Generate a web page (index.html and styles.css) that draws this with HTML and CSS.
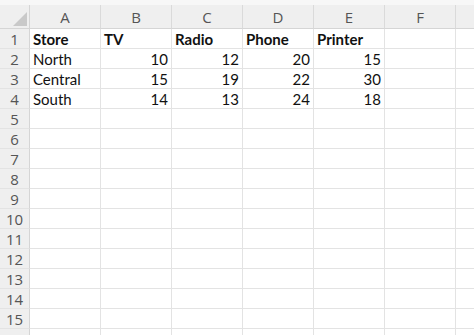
FILE: index.html
```html
<!DOCTYPE html>
<html>
<head>
<meta charset="utf-8">
<link rel="stylesheet" href="styles.css">
</head>
<body>
<div class="sheet">
  <div class="topstrip"></div>
  <div class="grid">
    <div class="corner"><div class="tri"></div></div>
    <div class="ch">A</div><div class="ch">B</div><div class="ch">C</div><div class="ch">D</div><div class="ch">E</div><div class="ch">F</div><div class="ch last"></div>

    <div class="rh">1</div><div class="c b">Store</div><div class="c b">TV</div><div class="c b">Radio</div><div class="c b">Phone</div><div class="c b">Printer</div><div class="c"></div><div class="c last"></div>
    <div class="rh">2</div><div class="c">North</div><div class="c n">10</div><div class="c n">12</div><div class="c n">20</div><div class="c n">15</div><div class="c"></div><div class="c last"></div>
    <div class="rh">3</div><div class="c">Central</div><div class="c n">15</div><div class="c n">19</div><div class="c n">22</div><div class="c n">30</div><div class="c"></div><div class="c last"></div>
    <div class="rh">4</div><div class="c">South</div><div class="c n">14</div><div class="c n">13</div><div class="c n">24</div><div class="c n">18</div><div class="c"></div><div class="c last"></div>
    <div class="rh">5</div><div class="c"></div><div class="c"></div><div class="c"></div><div class="c"></div><div class="c"></div><div class="c"></div><div class="c last"></div>
    <div class="rh">6</div><div class="c"></div><div class="c"></div><div class="c"></div><div class="c"></div><div class="c"></div><div class="c"></div><div class="c last"></div>
    <div class="rh">7</div><div class="c"></div><div class="c"></div><div class="c"></div><div class="c"></div><div class="c"></div><div class="c"></div><div class="c last"></div>
    <div class="rh">8</div><div class="c"></div><div class="c"></div><div class="c"></div><div class="c"></div><div class="c"></div><div class="c"></div><div class="c last"></div>
    <div class="rh">9</div><div class="c"></div><div class="c"></div><div class="c"></div><div class="c"></div><div class="c"></div><div class="c"></div><div class="c last"></div>
    <div class="rh">10</div><div class="c"></div><div class="c"></div><div class="c"></div><div class="c"></div><div class="c"></div><div class="c"></div><div class="c last"></div>
    <div class="rh">11</div><div class="c"></div><div class="c"></div><div class="c"></div><div class="c"></div><div class="c"></div><div class="c"></div><div class="c last"></div>
    <div class="rh">12</div><div class="c"></div><div class="c"></div><div class="c"></div><div class="c"></div><div class="c"></div><div class="c"></div><div class="c last"></div>
    <div class="rh">13</div><div class="c"></div><div class="c"></div><div class="c"></div><div class="c"></div><div class="c"></div><div class="c"></div><div class="c last"></div>
    <div class="rh">14</div><div class="c"></div><div class="c"></div><div class="c"></div><div class="c"></div><div class="c"></div><div class="c"></div><div class="c last"></div>
    <div class="rh">15</div><div class="c"></div><div class="c"></div><div class="c"></div><div class="c"></div><div class="c"></div><div class="c"></div><div class="c last"></div>
    <div class="rh"></div><div class="c"></div><div class="c"></div><div class="c"></div><div class="c"></div><div class="c"></div><div class="c"></div><div class="c last"></div>
  </div>
</div>
</body>
</html>
```

FILE: styles.css
```css
* { box-sizing: border-box; }
html, body { margin: 0; padding: 0; background: #ffffff; }
body { width: 474px; height: 335px; overflow: hidden; }
.sheet { width: 474px; }
.topstrip { height: 5px; background: #f7f7f7; }
.grid {
  display: grid;
  grid-template-columns: 30px repeat(6, 71px) 18px;
  grid-template-rows: 24px repeat(16, 20px);
  font-family: Lato, "Open Sans", sans-serif;
}
.corner {
  background: #efefef;
  border-right: 1px solid #d5d5d5;
  border-bottom: 1px solid #d5d5d5;
  display: flex;
  align-items: flex-end;
  justify-content: flex-end;
  padding: 0 2px 2px 0;
}
.tri {
  width: 14px;
  height: 14px;
  background: #c9c9c9;
  clip-path: polygon(100% 0, 100% 100%, 0 100%);
}
.ch {
  background: #efefef;
  border-right: 1px solid #dadada;
  border-bottom: 1px solid #d5d5d5;
  color: #555555;
  font-family: "Open Sans", sans-serif;
  font-size: 15px;
  display: flex;
  align-items: center;
  justify-content: center;
  padding-top: 1px;
}
.rh {
  background: #efefef;
  border-right: 1px solid #d5d5d5;
  border-bottom: 1px solid #e3e3e3;
  color: #555555;
  font-family: "Open Sans", sans-serif;
  font-size: 15px;
  display: flex;
  align-items: center;
  justify-content: center;
}
.c {
  border-right: 1px solid #e3e3e3;
  border-bottom: 1px solid #e3e3e3;
  color: #111111;
  font-size: 15px;
  display: flex;
  align-items: center;
  padding: 0 3px;
  white-space: nowrap;
  overflow: visible;
}
.b { font-weight: 700; }
.n { justify-content: flex-end; }
.last { border-right: none; }
```
